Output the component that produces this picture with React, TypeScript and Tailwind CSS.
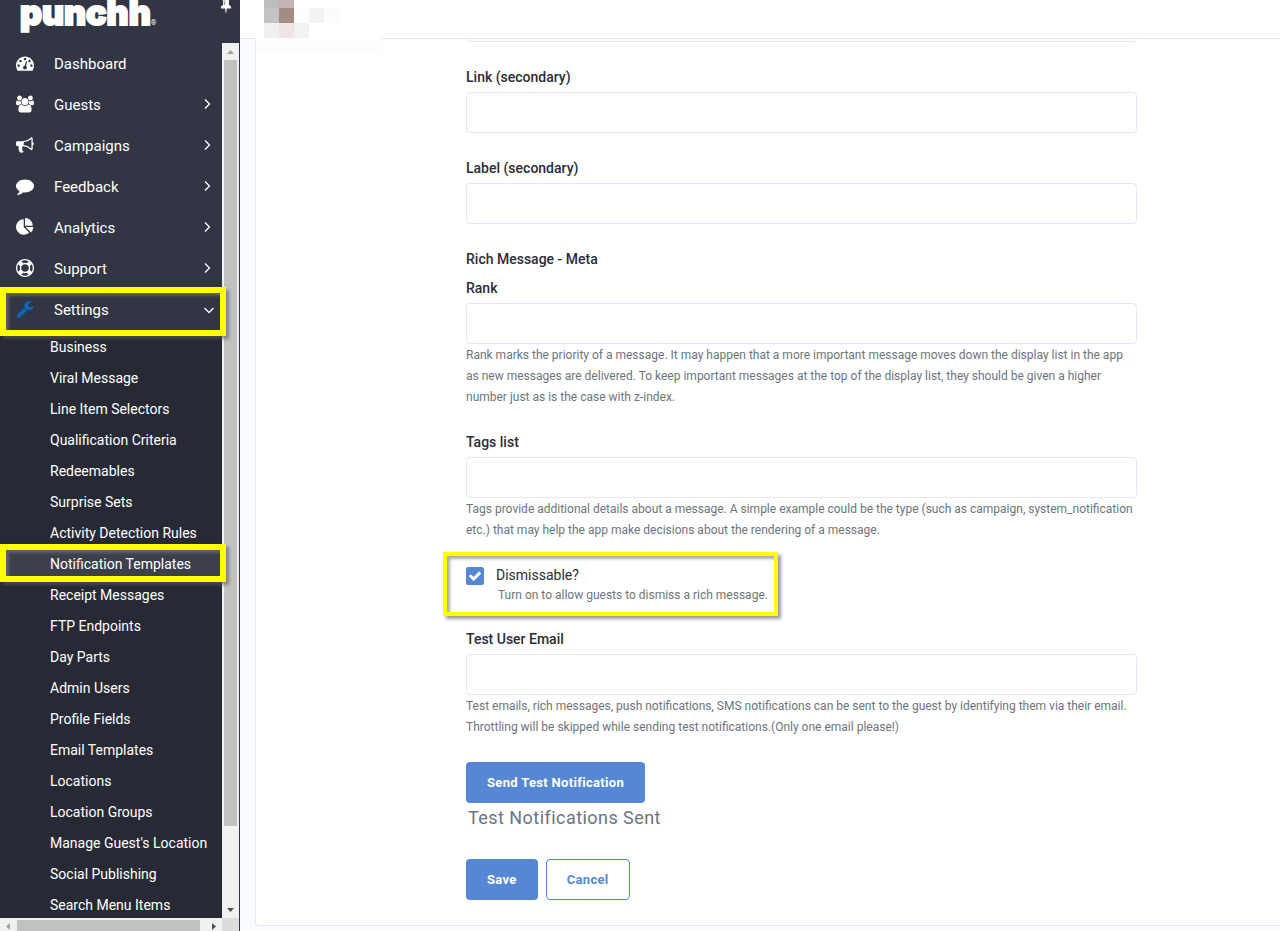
import React from 'react';

interface IconShape {
  viewBox: string;
  d: string;
}

interface NavItem {
  label: string;
  icon: IconShape;
  hasChildren: boolean;
}

const ICONS: Record<string, IconShape> = {
  dashboard: {
    viewBox: '0 0 1792 1792',
    d: 'M384 1152q0-53-37.5-90.5t-90.5-37.5-90.5 37.5-37.5 90.5 37.5 90.5 90.5 37.5 90.5-37.5 37.5-90.5zm192-448q0-53-37.5-90.5t-90.5-37.5-90.5 37.5-37.5 90.5 37.5 90.5 90.5 37.5 90.5-37.5 37.5-90.5zm428 481l101-382q6-26-7.5-48.5t-38.5-29.5-48 6.5-30 39.5l-101 382q-60 5-107 43.5t-63 98.5q-20 77 20 146t117 89 146-20 89-117q16-60-6-117t-72-91zm660-33q0-53-37.5-90.5t-90.5-37.5-90.5 37.5-37.5 90.5 37.5 90.5 90.5 37.5 90.5-37.5 37.5-90.5zm-640-640q0-53-37.5-90.5t-90.5-37.5-90.5 37.5-37.5 90.5 37.5 90.5 90.5 37.5 90.5-37.5 37.5-90.5zm448 192q0-53-37.5-90.5t-90.5-37.5-90.5 37.5-37.5 90.5 37.5 90.5 90.5 37.5 90.5-37.5 37.5-90.5zm320 448q0 261-141 483-19 29-54 29h-1402q-35 0-54-29-141-221-141-483 0-182 71-348t191-286 286-191 348-71 348 71 286 191 191 286 71 348z',
  },
  guests: {
    viewBox: '0 0 1920 1792',
    d: 'M593 896q-162 5-265 128h-134q-82 0-138-40.5t-56-118.5q0-353 124-353 6 0 43.5 21t97.5 42.5 119 21.5q67 0 133-23-5 37-5 66 0 139 81 256zm1071 637q0 120-73 189.5t-194 69.5h-874q-121 0-194-69.5t-73-189.5q0-53 3.5-103.5t14-109 26.5-108.5 43-97.5 62-81 85.5-53.5 111.5-20q10 0 43 21.5t73 48 107 48 135 21.5 135-21.5 107-48 73-48 43-21.5q61 0 111.5 20t85.5 53.5 62 81 43 97.5 26.5 108.5 14 109 3.5 103.5zm-1024-1277q0 106-75 181t-181 75-181-75-75-181 75-181 181-75 181 75 75 181zm704 384q0 159-112.5 271.5t-271.5 112.5-271.5-112.5-112.5-271.5 112.5-271.5 271.5-112.5 271.5 112.5 112.5 271.5zm576 225q0 78-56 118.5t-138 40.5h-134q-103-123-265-128 81-117 81-256 0-29-5-66 66 23 133 23 59 0 119-21.5t97.5-42.5 43.5-21q124 0 124 353zm-128-609q0 106-75 181t-181 75-181-75-75-181 75-181 181-75 181 75 75 181z',
  },
  campaigns: {
    viewBox: '0 0 1792 1792',
    d: 'M1664 640q53 0 90.5 37.5t37.5 90.5-37.5 90.5-90.5 37.5v384q0 52-38 90t-90 38q-417-347-812-380-58 19-91 66t-31 100.5 40 92.5q-20 33-23 65.5t6 58 33.5 55 48 50 61.5 50.5q-29 58-111.5 83t-168.5 11.5-132-55.5q-7-23-29.5-87.5t-32-94.5-23-89-15-101 3.5-98.5 22-110.5h-122q-66 0-113-47t-47-113v-192q0-66 47-113t113-47h480q435 0 896-384 52 0 90 38t38 90v384zm-128 604v-954q-394 302-768 343v270q377 42 768 341z',
  },
  feedback: {
    viewBox: '0 0 1792 1792',
    d: 'M1792 896q0 174-120 321.5t-326 233-450 85.5q-70 0-145-8-198 175-460 242-49 14-114 22-17 2-30.5-9t-17.5-29v-1q-3-4-.5-12t2-10 4.5-9.5l6-9 7-8.5 8-9q7-8 31-34.5t34.5-38 31-39.5 32.5-51 27-59 26-76q-157-89-247.5-220t-90.5-281q0-130 71-248.5t191-204.5 286-136.5 348-50.5 348 50.5 286 136.5 191 204.5 71 248.5z',
  },
  analytics: {
    viewBox: '0 0 1792 1792',
    d: 'M768 890l546 546q-106 108-247.5 168t-298.5 60q-209 0-385.5-103t-279.5-279.5-103-385.5 103-385.5 279.5-279.5 385.5-103v762zm187 6h773q0 157-60 298.5t-168 247.5zm709-128h-768v-768q209 0 385.5 103t279.5 279.5 103 385.5z',
  },
  support: {
    viewBox: '0 0 1792 1792',
    d: 'M896 0q182 0 348 71t286 191 191 286 71 348-71 348-191 286-286 191-348 71-348-71-286-191-191-286-71-348 71-348 191-286 286-191 348-71zm0 128q-190 0-361 90l194 194q82-28 167-28t167 28l194-194q-171-90-361-90zm-678 1129l194-194q-28-82-28-167t28-167l-194-194q-90 171-90 361t90 361zm678 407q190 0 361-90l-194-194q-82 28-167 28t-167-28l-194 194q171 90 361 90zm0-384q159 0 271.5-112.5t112.5-271.5-112.5-271.5-271.5-112.5-271.5 112.5-112.5 271.5 112.5 271.5 271.5 112.5zm484-217l194 194q90-171 90-361t-90-361l-194 194q28 82 28 167t-28 167z',
  },
  settings: {
    viewBox: '0 0 1792 1792',
    d: 'M448 1472q0-26-19-45t-45-19-45 19-19 45 19 45 45 19 45-19 19-45zm644-420l-682 682q-37 37-90 37-52 0-91-37l-106-108q-38-36-38-90 0-53 38-91l681-681q39 98 114.5 173.5t173.5 114.5zm634-435q0 39-23 106-47 134-164.5 217.5t-258.5 83.5q-185 0-316.5-131.5t-131.5-316.5 131.5-316.5 316.5-131.5q58 0 121.5 16.5t107.5 46.5q16 11 16 28t-16 28l-293 169v224l193 107q5-3 79-48.5t135.5-81 70.5-35.5q15 0 23.5 10t8.5 25z',
  },
  pin: {
    viewBox: '0 0 1792 1792',
    d: 'M800 864v-448q0-14-9-23t-23-9-23 9-9 23v448q0 14 9 23t23 9 23-9 9-23zm672 352q0 26-19 45t-45 19h-429l-51 483q-2 12-10.5 20.5t-20.5 8.5h-1q-27 0-32-27l-76-485h-404q-26 0-45-19t-19-45q0-123 78.5-221.5t177.5-98.5v-512q-52 0-90-38t-38-90 38-90 90-38h640q52 0 90 38t38 90-38 90-90 38v512q99 0 177.5 98.5t78.5 221.5z',
  },
  check: {
    viewBox: '0 0 1792 1792',
    d: 'M1671 566q0 40-28 68l-724 724-136 136q-28 28-68 28t-68-28l-136-136-362-362q-28-28-28-68t28-68l136-136q28-28 68-28t68 28l294 295 656-657q28-28 68-28t68 28l136 136q28 28 28 68z',
  },
};

const NAV_ITEMS: NavItem[] = [
  { label: 'Dashboard', icon: ICONS.dashboard, hasChildren: false },
  { label: 'Guests', icon: ICONS.guests, hasChildren: true },
  { label: 'Campaigns', icon: ICONS.campaigns, hasChildren: true },
  { label: 'Feedback', icon: ICONS.feedback, hasChildren: true },
  { label: 'Analytics', icon: ICONS.analytics, hasChildren: true },
  { label: 'Support', icon: ICONS.support, hasChildren: true },
];

const SETTINGS_ITEMS = [
  'Business',
  'Viral Message',
  'Line Item Selectors',
  'Qualification Criteria',
  'Redeemables',
  'Surprise Sets',
  'Activity Detection Rules',
  'Notification Templates',
  'Receipt Messages',
  'FTP Endpoints',
  'Day Parts',
  'Admin Users',
  'Profile Fields',
  'Email Templates',
  'Locations',
  'Location Groups',
  "Manage Guest's Location",
  'Social Publishing',
  'Search Menu Items',
];

const ACTIVE_ITEM = 'Notification Templates';

const Icon: React.FC<{ icon: IconShape; className: string }> = ({ icon, className }) => (
  <svg viewBox={icon.viewBox} className={className} fill="currentColor" aria-hidden="true">
    <path d={icon.d} />
  </svg>
);

const Chevron: React.FC<{ className: string }> = ({ className }) => (
  <svg viewBox="0 0 12 12" className={className} fill="none" stroke="currentColor" strokeWidth="1.3" aria-hidden="true">
    <path d="M4 1.500 8.500 6 4 10.500" />
  </svg>
);

const Highlight: React.FC<{ className: string }> = ({ className }) => (
  <span
    className={`pointer-events-none absolute border-[#ffff00] shadow-[3px_3px_3px_rgba(90,90,90,0.6),inset_3px_3px_3px_rgba(120,120,120,0.6)] ${className}`}
  />
);

const VerticalScrollbar: React.FC = () => (
  <div className="flex w-[17px] shrink-0 flex-col items-center bg-[#f1f1f1]">
    <svg viewBox="0 0 17 17" className="h-[17px] w-[17px]" fill="#a3a3a3" aria-hidden="true">
      <path d="M5 11h7l-3.500-4z" />
    </svg>
    <div className="w-[13px] flex-[766] bg-[#c1c1c1]" />
    <div className="flex-[75]" />
    <svg viewBox="0 0 17 17" className="h-[17px] w-[17px]" fill="#505050" aria-hidden="true">
      <path d="M5 7h7l-3.500 4z" />
    </svg>
  </div>
);

const HorizontalScrollbar: React.FC = () => (
  <div className="flex h-[13px] shrink-0 bg-[#f1f1f1]">
    <svg viewBox="0 0 17 13" className="h-[13px] w-[17px]" fill="#a3a3a3" aria-hidden="true">
      <path d="M10 5v7l-4-3.500z" />
    </svg>
    <div className="mt-[2px] flex-1 bg-[#c1c1c1]" />
    <div className="w-[5px]" />
    <svg viewBox="0 0 17 13" className="h-[13px] w-[17px]" fill="#505050" aria-hidden="true">
      <path d="M7 5v7l4-3.500z" />
    </svg>
    <div className="w-[17px] bg-[#dcdcdc]" />
  </div>
);

const Sidebar: React.FC = () => (
  <aside className="flex h-screen w-60 shrink-0 flex-col overflow-hidden border-r border-[#323644] bg-[#323644] text-white">
    <div className="flex h-[43px] shrink-0 items-start justify-between pr-[5px] pl-5">
      <a href="#home" className="-mt-[11px] flex items-end">
        <span className="font-[Inter] text-[34px] leading-[48px] font-black [-webkit-text-stroke:2px_white]">punchh</span>
        <span className="mb-[10px] text-[7px] leading-[8px]">®</span>
      </a>
      <button type="button" aria-label="Pin menu" className="-mt-[3px]">
        <Icon icon={ICONS.pin} className="h-4 w-4" />
      </button>
    </div>
    <div className="flex min-h-0 flex-1">
      <nav className="relative z-10 min-w-0 flex-1 overflow-y-clip">
        <ul>
          {NAV_ITEMS.map(item => (
            <li key={item.label}>
              <a href="#menu" className="flex h-[41px] items-center pr-[9px] pl-4 text-[15px]">
                <Icon icon={item.icon} className="mr-5 mb-[2px] h-[18px] w-[18px]" />
                <span className="flex-1 pt-[2px]">{item.label}</span>
                {item.hasChildren && <Chevron className="mb-[2px] h-3 w-3" />}
              </a>
            </li>
          ))}
          <li>
            <a href="#settings" className="relative flex h-[41px] items-center pr-[7px] pl-4 text-[15px]">
              <Icon icon={ICONS.settings} className="mr-5 mb-[2px] h-[18px] w-[18px] text-[#0a67bd]" />
              <span className="flex-1 pt-[2px]">Settings</span>
              <Chevron className="h-3 w-3 rotate-90" />
              <Highlight className="-top-[2px] -right-[4px] -bottom-[6px] left-0 z-10 border-[6px]" />
            </a>
            <ul className="bg-[#272a34] pt-px">
              {SETTINGS_ITEMS.map(label => (
                <li key={label}>
                  <a
                    href="#settings"
                    className={`relative flex h-[31px] items-center pl-[50px] text-sm whitespace-nowrap ${label === ACTIVE_ITEM ? 'bg-[#3c404b]' : ''}`}
                  >
                    {label}
                    {label === ACTIVE_ITEM && (
                      <Highlight className="-top-1 -right-1 -bottom-[3px] left-0 z-10 border-[6px]" />
                    )}
                  </a>
                </li>
              ))}
            </ul>
          </li>
        </ul>
      </nav>
      <VerticalScrollbar />
    </div>
    <HorizontalScrollbar />
  </aside>
);

interface FieldProps {
  id: string;
  label: string;
  help?: string;
}

const Field: React.FC<FieldProps> = ({ id, label, help }) => (
  <div>
    <label htmlFor={id} className="mb-[3px] block text-sm leading-[23px] font-medium text-[#2b2d38]">
      {label}
    </label>
    <input id={id} type="text" className="block h-[41px] w-full rounded-[4px] border border-[#e2e8f5] bg-white px-3 text-sm" />
    {help && <p className="-mb-px pt-px text-xs leading-[21px] text-[#6c757d]">{help}</p>}
  </div>
);

// Blurred account block in the top bar, one tile per cell
const TILES = [
  ['bg-[#bdbdbd]', 'bg-[#c4b5b4]', 'bg-white', 'bg-white', 'bg-white'],
  ['bg-[#c3c3c3]', 'bg-[#a38c86]', 'bg-[#fefefe]', 'bg-[#f3f3f3]', 'bg-[#fcfcfc]'],
  ['bg-[#f0f0f0]', 'bg-[#f0e5e4]', 'bg-[#f2f2f2]', 'bg-white', 'bg-white'],
];

const App: React.FC = () => {
  return (
    <div className="flex h-screen overflow-hidden bg-[#fafbfe] font-[Roboto,sans-serif]">
      <Sidebar />
      <div className="flex min-w-0 flex-1 flex-col">
        <header className="relative flex h-[39px] shrink-0 flex-col justify-end border-b border-[#e2e8f5] bg-white pl-6">
          {TILES.map((row, i) => (
            <div key={i} className={i === 0 ? 'flex h-2' : 'flex h-[15px]'}>
              {row.map((tile, j) => (
                <span key={j} className={`w-[15px] ${tile}`} />
              ))}
            </div>
          ))}
          <span className="absolute top-[38px] left-4 h-[15px] w-[126px] bg-[#fdfdfd]" />
        </header>
        <main className="min-h-0 flex-1 overflow-hidden pl-[15px]">
          <form className="rounded-bl-[4px] border-b border-l border-[#e2e8f5] bg-white pr-[143px] pb-[25px] pl-[210px]">
            <div className="-mt-[38px] flex flex-col gap-6">
              <input
                type="text"
                aria-label="Label"
                className="block h-[41px] w-full rounded-[4px] border border-[#e2e8f5] bg-white px-3 text-sm"
              />
              <Field id="link-secondary" label="Link (secondary)" />
              <Field id="label-secondary" label="Label (secondary)" />
              <section className="flex flex-col gap-[6px]">
                <h2 className="text-sm leading-[23px] font-medium text-[#2b2d38]">Rich Message - Meta</h2>
                <Field
                  id="rank"
                  label="Rank"
                  help="Rank marks the priority of a message. It may happen that a more important message moves down the display list in the app as new messages are delivered. To keep important messages at the top of the display list, they should be given a higher number just as is the case with z-index."
                />
              </section>
              <Field
                id="tags"
                label="Tags list"
                help="Tags provide additional details about a message. A simple example could be the type (such as campaign, system_notification etc.) that may help the app make decisions about the rendering of a message."
              />
            </div>
            <div className="relative my-6 w-fit pt-px">
              <div className="flex items-center gap-3">
                <span className="relative h-[18px] w-[18px]">
                  <input
                    id="dismissable"
                    type="checkbox"
                    defaultChecked
                    className="peer block h-[18px] w-[18px] appearance-none rounded-[2px] border border-[#5687d4] checked:bg-[#5687d4]"
                  />
                  <Icon
                    icon={ICONS.check}
                    className="pointer-events-none absolute top-[2px] left-[2px] hidden h-[14px] w-[14px] text-white peer-checked:block"
                  />
                </span>
                <label htmlFor="dismissable" className="text-sm leading-[21px] text-[#2b2d38]">
                  Dismissable?
                </label>
              </div>
              <p className="-mb-px pl-8 text-xs leading-[19px] text-[#6c757d]">Turn on to allow guests to dismiss a rich message.</p>
              <Highlight className="-top-3 -right-[10px] -bottom-[11px] -left-[23px] border-4" />
            </div>
            <Field
              id="test-email"
              label="Test User Email"
              help="Test emails, rich messages, push notifications, SMS notifications can be sent to the guest by identifying them via their email. Throttling will be skipped while sending test notifications.(Only one email please!)"
            />
            <button
              type="button"
              className="mt-[25px] block h-[41px] rounded-[4px] bg-[#5687d4] px-[21px] text-[13px] font-bold tracking-wide text-white"
            >
              Send Test Notification
            </button>
            <p className="pl-[2px] text-lg leading-[30px] tracking-wide text-[#6c757d]">Test Notifications Sent</p>
            <div className="mt-[26px] flex gap-2">
              <button type="submit" className="h-[41px] rounded-[4px] bg-[#5687d4] px-[21px] text-[13px] font-bold tracking-wide text-white">
                Save
              </button>
              <button
                type="button"
                className="h-[41px] rounded-[4px] border border-[#5687d4] bg-white px-5 text-[13px] font-bold tracking-wide text-[#5687d4]"
              >
                Cancel
              </button>
            </div>
          </form>
        </main>
      </div>
    </div>
  );
};

export default App;
